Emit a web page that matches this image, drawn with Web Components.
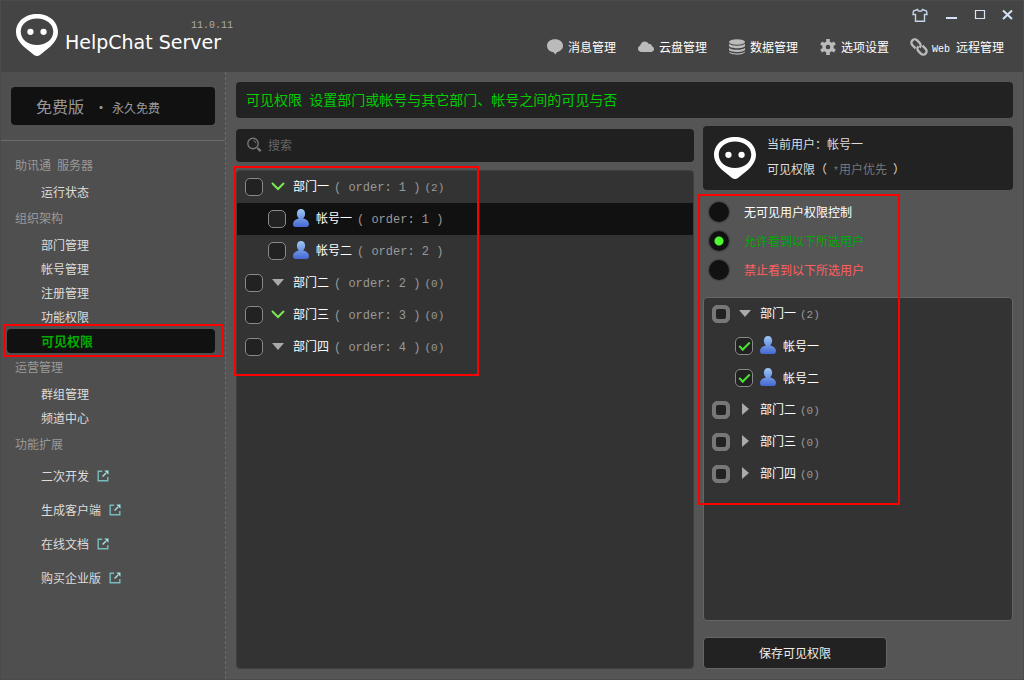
<!DOCTYPE html>
<html lang="zh-CN">
<head>
<meta charset="utf-8">
<meta name="viewport" content="width=device-width, initial-scale=1">
<title>HelpChat Server</title>
<style>
    body {
        margin: 0;
        background: #555;
        color: #fff;
        font: 12px/16px "Noto Sans CJK SC", sans-serif;
        --mono: "Liberation Mono", "Noto Sans CJK SC", monospace;
    }
</style>
</head>
<body>

<server-window></server-window>

<script>

function define(name, html, setup) {

    const template = document.createElement('template');
    template.innerHTML = html;

    customElements.define(name, class extends HTMLElement {

        constructor() {
            super();
            const shadow = this.attachShadow({ mode: 'open' });
            shadow.appendChild(template.content.cloneNode(true));
        }

        connectedCallback() {
            if (setup) setup(this, this.shadowRoot);
        }

    });

}

// Icons

const icons = {
    chat: '<path fill="#bbb" d="M8 0.300C3.500 0.300 0 3 0 6.700c0 3.500 3 6 6.500 6.500L8.300 15.500l1.800-2.500C13.500 12.300 16 9.800 16 6.700 16 3 12.500 0.300 8 0.300z"/>',
    cloud: '<path fill="#bbb" d="M3.500 13C1.500 13 0 11.500 0 9.700 0 8.100 1 6.900 2.300 6.500 2.500 4.200 4.500 2.500 6.700 2.500c1.700 0 3 .8 3.800 2.200 1.900-.3 3.300 1 3.500 2.600 1.200.4 2 1.500 2 2.800 0 1.600-1.300 2.900-3 2.900z"/>',
    data: '<g fill="#bbb"><ellipse cx="8" cy="3" rx="8" ry="2.800"/><path d="M0 4.700c2 2.600 14 2.600 16 0v2.300c-1 3-15 3-16 0zM0 8.800c2 2.700 14 2.700 16 0v2c-1 3-15 3-16 0zM0 12.500c2 2.600 14 2.600 16 0v.6c-1 3.400-15 3.400-16 0z"/></g>',
    gear: '<g fill="none" stroke="#bbb"><circle cx="8" cy="8" r="4" stroke-width="3.400"/><path stroke-width="3.600" d="M8 0v3.500M8 12.500V16M1.100 4l3 1.800M11.900 10.200l3 1.800M1.100 12l3-1.800M11.900 5.800l3-1.800"/></g>',
    link: '<g fill="none" stroke="#bbb" stroke-width="2.300" transform="rotate(45 8 8)"><path d="M6.500 11.400H2a3.400 3.400 0 0 1 0-6.800h3.500a3.400 3.400 0 0 1 3.400 3.400"/><path d="M9.500 4.600H14a3.400 3.400 0 0 1 0 6.800h-3.500A3.400 3.400 0 0 1 7.100 8"/></g>',
    shirt: '<path fill="none" stroke="#c5d3e6" stroke-width="1.400" d="M5.500 2.500L1.500 4 1 7.500h2.500v6.800h9V7.500H15L14.500 4l-4-1.500C10 4.800 6 4.800 5.500 2.500z"/>',
    min: '<path fill="#d5e3f6" d="M2 10h11v2H2z"/>',
    max: '<path fill="none" stroke="#d5e3f6" stroke-width="1.200" d="M3.500 3.500h9v8h-9z"/>',
    close: '<path fill="none" stroke="#d5e3f6" stroke-width="2" d="M3 3.500l9 8.500M12 3.500l-9 8.500"/>',
    open: '<path fill="none" stroke="#79bcbd" stroke-width="1.600" d="M7 2.500H2.500v11h11V9"/><path fill="none" stroke="#a0e4e5" stroke-width="1.600" d="M7.500 8.500l4-4"/><path fill="#a0e4e5" d="M9.500 1.700h4.800v4.800z"/>',
    search: '<g fill="none" stroke="#777"><circle cx="7" cy="6.500" r="5.200" stroke-width="1.400"/><path stroke-width="1" d="M7.500 3.700a2.800 2.800 0 0 1 2.400 2.400"/><path stroke-width="2.400" d="M11.500 11l3.200 3.200"/></g>',
    user: '<defs><linearGradient id="g" x1="0" y1="0" x2="0" y2="1"><stop offset="0" stop-color="#9cc8f4"/><stop offset="1" stop-color="#4668d4"/></linearGradient></defs><path fill="url(#g)" transform="translate(0 -2) scale(1 1.120)" d="M8 0C5.500 0 3.900 1.800 3.900 4.200c0 1.700.8 3.300 2 4.200C2.500 9 0 10.800 0 13.500 0 15.300 1 16 2.500 16h11c1.500 0 2.500-.7 2.500-2.500 0-2.700-2.500-4.500-5.900-5.100 1.200-.9 2-2.500 2-4.200C12.100 1.800 10.500 0 8 0z"/>',
    check: '<path fill="none" stroke="#7be852" stroke-width="2" d="M2 4l6 6 6-6"/>',
    down: '<path fill="#aaa" d="M2 4h12l-6 7z"/>',
    right: '<path fill="#aaa" d="M5 1l7 6-7 6z"/>',
    bot: '<path fill="#fff" fill-rule="evenodd" d="M8 0C3.500 0 0 2.900 0 6.800c0 2.200 1.200 4 3 5.700L7 15.700c.6.400 1.400.4 2 0l4-3.200c1.800-1.700 3-3.500 3-5.700C16 2.900 12.500 0 8 0zM8 1.700c3.500 0 6.200 2.100 6.200 5 0 3-2.700 5.100-6.200 5.100S1.800 9.700 1.800 6.700c0-2.900 2.700-5 6.200-5z"/><circle cx="5.500" cy="6.800" r="1.200" fill="#fff"/><circle cx="10.500" cy="6.800" r="1.200" fill="#fff"/>'
};

define('ui-icon', `
    <style>
    :host {
        display: block;
        flex: none;
        width: var(--size, 16px);
        height: var(--size, 16px);
    }
    svg { display: block; width: 100%; height: 100%; overflow: visible; }
    </style>
    <svg viewBox="0 0 16 16" aria-hidden="true"></svg>
`, (host, shadow) => {
    shadow.querySelector('svg').innerHTML = icons[host.getAttribute('name')];
});

// Red frame around an area of interest

define('mark-frame', `
    <style>
    :host {
        position: absolute;
        z-index: 2;
        box-sizing: border-box;
        border: 2px solid #f00;
        pointer-events: none;
    }
    </style>
`);

// Header

define('app-header', `
    <style>
    :host {
        display: flex;
        justify-content: space-between;
        height: 71px;
        background: #444;
    }
    .brand { display: flex; gap: 7px; padding: 13px 0 0 15px; --size: 42px; }
    .title { display: flex; flex-direction: column; padding-top: 4px; }
    .version { align-self: flex-end; font: 10px/16px var(--mono); color: #aaa; }
    h1 { margin: 0; padding-right: 12px; font: 400 19px/16px "DejaVu Sans", sans-serif; white-space: nowrap; }
    .right { display: flex; flex-direction: column; align-items: flex-end; }
    .window { display: flex; padding-right: 1px; }
    button {
        display: flex;
        justify-content: center;
        align-items: center;
        width: 28px;
        height: 28px;
        padding: 0;
        border: 0;
        background: none;
    }
    button.skin { width: 36px; }
    nav { display: flex; gap: 22px; padding: 10px 19px 0 0; }
    a { display: flex; align-items: center; gap: 5px; height: 16px; color: #fff; text-decoration: none; white-space: nowrap; }
    small { font: 10px/10px var(--mono); }
    </style>
    <div class="brand">
        <ui-icon name="bot"></ui-icon>
        <div class="title">
            <span class="version">11.0.11</span>
            <h1>HelpChat Server</h1>
        </div>
    </div>
    <div class="right">
        <div class="window">
            <button class="skin" aria-label="皮肤"><ui-icon name="shirt"></ui-icon></button>
            <button aria-label="最小化"><ui-icon name="min"></ui-icon></button>
            <button aria-label="最大化"><ui-icon name="max"></ui-icon></button>
            <button aria-label="关闭"><ui-icon name="close"></ui-icon></button>
        </div>
        <nav>
            <a href="#message"><ui-icon name="chat"></ui-icon>消息管理</a>
            <a href="#disk"><ui-icon name="cloud"></ui-icon>云盘管理</a>
            <a href="#data"><ui-icon name="data"></ui-icon>数据管理</a>
            <a href="#options"><ui-icon name="gear"></ui-icon>选项设置</a>
            <a href="#web"><ui-icon name="link"></ui-icon><span><small>Web </small>远程管理</span></a>
        </nav>
    </div>
`);

// Sidebar

define('nav-group', `
    <style>
    :host { display: block; }
    h2 { margin: 0; padding: 0 0 2px 14px; font-size: 12px; font-weight: 400; line-height: 27px; color: #999; }
    </style>
    <h2><slot name="title"></slot></h2>
    <slot></slot>
`);

define('nav-item', `
    <style>
    :host { display: block; position: relative; }
    a {
        display: flex;
        align-items: center;
        gap: 7px;
        height: 24px;
        margin: 0 10px 0 6px;
        padding-left: 34px;
        border-radius: 4px;
        color: #ddd;
        text-decoration: none;
    }
    ui-icon { display: none; --size: 14px; }
    :host([external]) a { height: 34px; }
    :host([external]) ui-icon { display: block; }
    :host([active]) a { background: #111; color: #00aa00; font-size: 13px; font-weight: 700; }
    mark-frame { display: none; top: -5px; bottom: -4px; left: 3px; right: 1px; }
    :host([active]) mark-frame { display: block; }
    </style>
    <a><slot></slot><ui-icon name="open"></ui-icon></a>
    <mark-frame></mark-frame>
`, (host, shadow) => {
    shadow.querySelector('a').href = '#' + host.getAttribute('to');
});

define('side-bar', `
    <style>
    :host {
        display: block;
        flex: none;
        box-sizing: border-box;
        width: 225px;
        background: #4f4f4f;
        border-right: 1px dashed #6c6c6c;
    }
    .license { padding: 15px 10px; border-bottom: 1px solid #6c6c6c; }
    .license p {
        display: flex;
        align-items: baseline;
        height: 38px;
        margin: 0;
        padding-left: 25px;
        border-radius: 4px;
        background: #111;
        color: #999;
        line-height: 38px;
    }
    .license b { font-size: 16px; font-weight: 400; }
    .license i { box-sizing: border-box; width: 28px; padding-left: 6px; text-align: center; font-style: normal; font-weight: 700; }
    nav { padding-top: 10px; }
    .space { font: 10px/10px var(--mono); }
    </style>
    <div class="license"><p><b>免费版</b><i>·</i><span>永久免费</span></p></div>
    <nav>
        <nav-group>
            <span slot="title">助讯通<span class="space"> </span>服务器</span>
            <nav-item to="status">运行状态</nav-item>
        </nav-group>
        <nav-group>
            <span slot="title">组织架构</span>
            <nav-item to="departments">部门管理</nav-item>
            <nav-item to="accounts">帐号管理</nav-item>
            <nav-item to="register">注册管理</nav-item>
            <nav-item to="features">功能权限</nav-item>
            <nav-item to="visible" active>可见权限</nav-item>
        </nav-group>
        <nav-group>
            <span slot="title">运营管理</span>
            <nav-item to="groups">群组管理</nav-item>
            <nav-item to="channels">频道中心</nav-item>
        </nav-group>
        <nav-group>
            <span slot="title">功能扩展</span>
            <nav-item to="develop" external>二次开发</nav-item>
            <nav-item to="client" external>生成客户端</nav-item>
            <nav-item to="docs" external>在线文档</nav-item>
            <nav-item to="buy" external>购买企业版</nav-item>
        </nav-group>
    </nav>
`);

// Search field

define('search-field', `
    <style>
    :host {
        display: flex;
        align-items: center;
        gap: 6px;
        box-sizing: border-box;
        height: 33px;
        padding: 0 10px 2px;
        border-radius: 4px;
        background: #202020;
    }
    input {
        flex: 1;
        min-width: 0;
        padding: 0;
        border: 0;
        outline: 0;
        background: none;
        color: #ddd;
        font: inherit;
    }
    input::placeholder { color: #666; }
    </style>
    <ui-icon name="search"></ui-icon>
    <input type="text" placeholder="搜索" aria-label="搜索">
`);

// One line of a department tree

define('tree-row', `
    <style>
    :host {
        display: flex;
        align-items: center;
        gap: 7px;
        height: 32px;
        padding-left: 8px;
        white-space: nowrap;
    }
    :host([child]) { padding-left: 31px; }
    :host([selected]) { background: #111; }
    input {
        appearance: none;
        display: grid;
        place-content: center;
        flex: none;
        box-sizing: border-box;
        width: 18px;
        height: 18px;
        margin: 0;
        border: 1px solid #8a8a8a;
        border-radius: 5px;
        background: #222;
    }
    input:indeterminate { border-color: #777; background: #777; }
    input:indeterminate::after {
        content: "";
        width: 10px;
        height: 10px;
        border-radius: 2px;
        background: #222;
    }
    input:checked::after {
        content: "";
        width: 9px;
        height: 4px;
        margin-bottom: 3px;
        border: solid #4be234;
        border-width: 0 0 2px 2px;
        transform: rotate(-45deg);
    }
    button { padding: 0; border: 0; background: none; }
    label { display: flex; align-items: baseline; }
    ::slotted([slot=order]) { margin-left: 5px; font: 12px/16px var(--mono); color: #999; }
    ::slotted([slot=count]) { margin-left: 4px; font: 11px/16px var(--mono); color: #999; }
    </style>
    <input type="checkbox" id="pick">
    <button aria-label="展开"><ui-icon></ui-icon></button>
    <label for="pick"><span><slot></slot></span><slot name="order"></slot><slot name="count"></slot></label>
`, (host, shadow) => {
    const box = shadow.querySelector('input');
    box.checked = host.hasAttribute('checked');
    box.indeterminate = host.hasAttribute('mixed');
    if (host.hasAttribute('child')) {
        const user = document.createElement('ui-icon');
        user.setAttribute('name', 'user');
        shadow.querySelector('button').replaceWith(user);
    } else {
        const icon = document.createElement('ui-icon');
        icon.setAttribute('name', host.getAttribute('icon'));
        shadow.querySelector('button').replaceChildren(icon);
    }
});

define('tree-panel', `
    <style>
    :host {
        display: block;
        box-sizing: border-box;
        position: relative;
        flex: 1;
        border: 1px solid var(--edge, #404040);
        border-radius: 4px;
        background: #333;
    }
    </style>
    <slot></slot>
`);

define('user-card', `
    <style>
    :host {
        display: flex;
        align-items: center;
        gap: 11px;
        height: 64px;
        padding-left: 11px;
        border-radius: 4px;
        background: #222;
        color: #ddd;
        --size: 42px;
    }
    div { padding-bottom: 4px; }
    p { margin: 0; line-height: 25px; white-space: nowrap; }
    .note { color: #777; }
    small { font: 10px/10px var(--mono); }
    </style>
    <ui-icon name="bot"></ui-icon>
    <div>
        <p>当前用户：<slot></slot></p>
        <p>可见权限（<span class="note"><small> *</small>用户优先</span><small> </small>）</p>
    </div>
`);

define('visibility-choice', `
    <style>
    :host { display: block; padding: 7px 0 13px 6px; }
    label { display: flex; align-items: center; gap: 15px; height: 29px; }
    input {
        appearance: none;
        width: 20px;
        height: 20px;
        margin: 0;
        border-radius: 50%;
        background: #111;
        box-shadow: 0 0 1px 1px #444;
    }
    input:checked { background: radial-gradient(circle, #4dfa30 4px, #111 5px); }
    .allow { color: #00aa00; }
    .deny { color: #ff6060; }
    </style>
    <label><input type="radio" name="rule">无可见用户权限控制</label>
    <label class="allow"><input type="radio" name="rule" checked>允许看到以下所选用户</label>
    <label class="deny"><input type="radio" name="rule">禁止看到以下所选用户</label>
`);

// Page of visible permissions

define('visible-page', `
    <style>
    :host {
        display: flex;
        flex-direction: column;
        flex: 1;
        gap: 8px;
        min-width: 0;
        padding: 10px 10px;
    }
    h2 {
        margin: 0;
        padding: 0 10px 2px;
        border-radius: 4px;
        background: #222;
        color: #00cc00;
        font-size: 14px;
        font-weight: 400;
        line-height: 34px;
    }
    h2 span { font: 12px/12px var(--mono); }
    .columns { display: grid; grid-template-columns: 1fr 310px; gap: 9px; flex: 1; }
    .left, .right { display: flex; flex-direction: column; position: relative; }
    .left { gap: 8px; padding-top: 3px; }
    .right { --edge: #666; }
    .left mark-frame { top: -5px; left: -3px; width: 245px; height: 210px; }
    .right > mark-frame { top: 68px; left: -5px; width: 202px; height: 311px; }
    .save {
        align-self: flex-start;
        height: 32px;
        margin-top: 16px;
        padding: 0 55px;
        border: 1px solid #666;
        border-radius: 4px;
        background: #222;
        color: #eee;
        font: inherit;
    }
    </style>
    <h2>可见权限<span> </span>设置部门或帐号与其它部门、帐号之间的可见与否</h2>
    <div class="columns">
        <div class="left">
            <search-field></search-field>
            <tree-panel>
                <tree-row icon="check">部门一<span slot="order">( order: 1 )</span><span slot="count">(2)</span></tree-row>
                <tree-row child selected>帐号一<span slot="order">( order: 1 )</span></tree-row>
                <tree-row child>帐号二<span slot="order">( order: 2 )</span></tree-row>
                <tree-row icon="down">部门二<span slot="order">( order: 2 )</span><span slot="count">(0)</span></tree-row>
                <tree-row icon="check">部门三<span slot="order">( order: 3 )</span><span slot="count">(0)</span></tree-row>
                <tree-row icon="down">部门四<span slot="order">( order: 4 )</span><span slot="count">(0)</span></tree-row>
                <mark-frame></mark-frame>
            </tree-panel>
        </div>
        <div class="right">
            <user-card>帐号一</user-card>
            <visibility-choice></visibility-choice>
            <tree-panel>
                <tree-row mixed icon="down">部门一<span slot="count">(2)</span></tree-row>
                <tree-row child checked>帐号一</tree-row>
                <tree-row child checked>帐号二</tree-row>
                <tree-row mixed icon="right">部门二<span slot="count">(0)</span></tree-row>
                <tree-row mixed icon="right">部门三<span slot="count">(0)</span></tree-row>
                <tree-row mixed icon="right">部门四<span slot="count">(0)</span></tree-row>
            </tree-panel>
            <button class="save">保存可见权限</button>
            <mark-frame></mark-frame>
        </div>
    </div>
`);

define('server-window', `
    <style>
    :host {
        display: flex;
        flex-direction: column;
        box-sizing: border-box;
        min-height: 100vh;
        border: 1px solid #4c4a4a;
        background: #555;
    }
    main { display: flex; flex: 1; }
    </style>
    <app-header></app-header>
    <main>
        <side-bar></side-bar>
        <visible-page></visible-page>
    </main>
`);

</script>
</body>
</html>
